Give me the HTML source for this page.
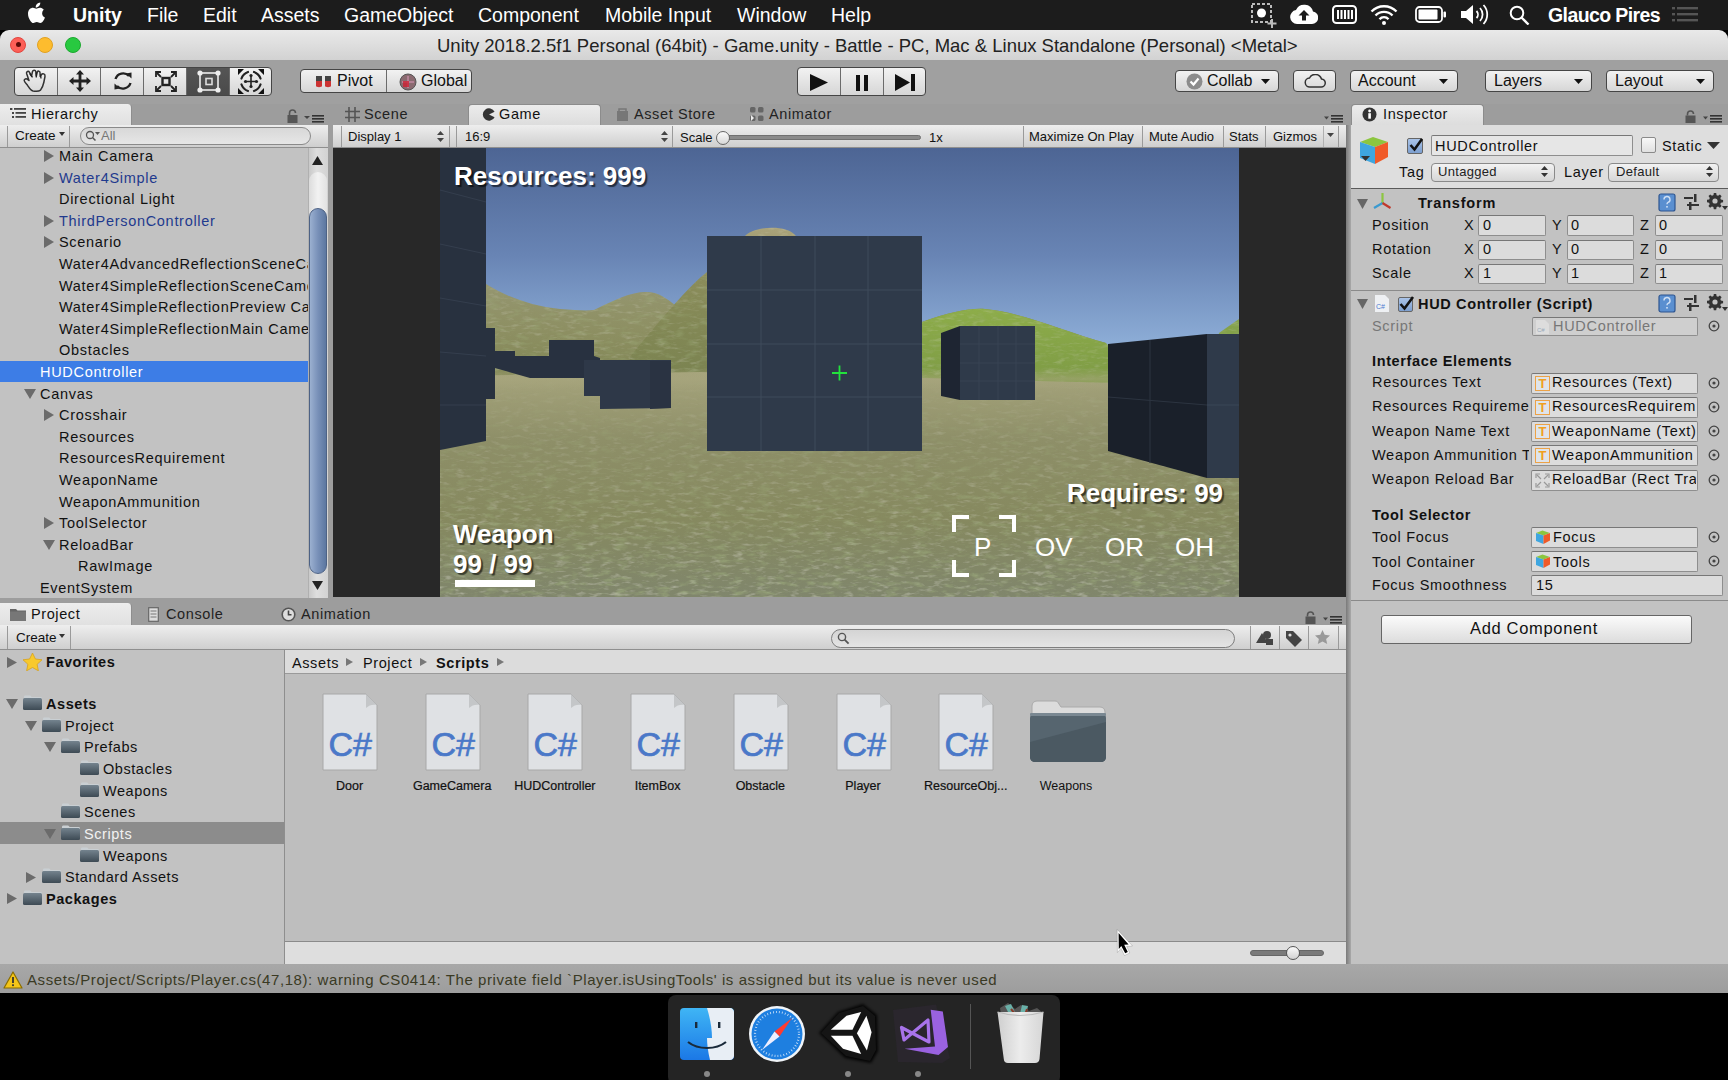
<!DOCTYPE html>
<html><head><meta charset="utf-8">
<style>
*{box-sizing:border-box;margin:0;padding:0}
html,body{width:1728px;height:1080px;overflow:hidden;background:#000;font-family:"Liberation Sans",sans-serif;}
.a{position:absolute}
.t{position:absolute;white-space:nowrap;line-height:1}
#menubar{left:0;top:0;width:1728px;height:30px;background:#1c1c1c;color:#fff;font-size:19.5px}
#titlebar{left:0;top:29.5px;width:1728px;height:30.5px;background:linear-gradient(#e9e9e9,#d2d2d2);border-radius:9px 9px 0 0}
#toolbar{left:0;top:60px;width:1728px;height:44px;background:#a0a0a0}
.btn{position:absolute;border:1px solid #454545;border-radius:4px;background:linear-gradient(#f2f2f2,#d6d6d6);}
.seg{position:absolute;top:0;bottom:0;border-right:1px solid #6b6b6b}
.tabstrip{position:absolute;background:#a3a3a3}
.tab{position:absolute;background:linear-gradient(#ececec,#dcdcdc);border-radius:4px 4px 0 0;border:1px solid #8c8c8c;border-bottom:none}
.tabtxt{font-size:14.5px;letter-spacing:0.6px;color:#111}
.ptool{position:absolute;background:linear-gradient(#eeeeee,#cfcfcf);border-bottom:1px solid #8f8f8f}
.panel{position:absolute;background:#c2c2c2}
.hrow{font-size:14.5px;letter-spacing:0.7px;color:#111}
</style></head><body>
<div class="a" style="left:0;top:60px;width:1728px;height:933px;background:#9d9d9d"></div>
<!-- MENU BAR -->
<div id="menubar" class="a">
 <svg class="a" style="left:28px;top:2px" width="18" height="21.5" viewBox="0 0 20 23"><path fill="#fff" d="M13.6 0c.2 1.5-.4 3-1.3 4-.9 1-2.3 1.8-3.7 1.7-.2-1.4.5-2.9 1.3-3.8C10.8.9 12.3.1 13.6 0zM18.3 7.7c-.2.1-2.6 1.5-2.6 4.4 0 3.4 3 4.6 3.1 4.6 0 .1-.5 1.7-1.6 3.3-1 1.4-2 2.8-3.6 2.8s-2-.9-3.8-.9c-1.8 0-2.4 1-3.8 1-1.5 0-2.6-1.4-3.6-2.9C1.2 18.300 0 15.4 0 12.600c0-4.3 2.800-6.600 5.600-6.600 1.500 0 2.700 1 3.600 1 .9 0 2.300-1 4-1 .6 0 2.9.1 4.4 2.3z"/></svg>
 <div class="t" style="left:73px;top:6px;font-weight:bold">Unity</div>
 <div class="t" style="left:147px;top:6px">File</div>
 <div class="t" style="left:203px;top:6px">Edit</div>
 <div class="t" style="left:261px;top:6px">Assets</div>
 <div class="t" style="left:344px;top:6px">GameObject</div>
 <div class="t" style="left:478px;top:6px">Component</div>
 <div class="t" style="left:605px;top:6px">Mobile Input</div>
 <div class="t" style="left:737px;top:6px">Window</div>
 <div class="t" style="left:831px;top:6px">Help</div>
 <!-- status icons -->
 <svg class="a" style="left:1251px;top:3px" width="27" height="25" viewBox="0 0 27 25"><g fill="none" stroke="#bbb" stroke-width="2" stroke-dasharray="3 2"><rect x="1" y="1" width="19" height="18"/></g><circle cx="10.5" cy="10" r="4.5" fill="#fff"/><path d="M21 16v9M16.5 20.5h9" stroke="#bbb" stroke-width="2"/></svg>
 <svg class="a" style="left:1290px;top:4px" width="28" height="20" viewBox="0 0 28 20"><path fill="#fff" d="M7 20a7 7 0 0 1-1-13.9A9 9 0 0 1 23 7.5a6.3 6.3 0 0 1-1 12.5z"/><path fill="#1c1c1c" d="M14 6l-5.5 5.5h3.5v5h4v-5h3.5z"/></svg>
 <svg class="a" style="left:1332px;top:5px" width="25" height="19" viewBox="0 0 25 19"><rect x="1" y="1" width="23" height="17" rx="3.5" fill="none" stroke="#fff" stroke-width="2"/><g fill="#fff"><rect x="5" y="5" width="2" height="9"/><rect x="8.5" y="5" width="2" height="9"/><rect x="12" y="5" width="2" height="9"/><rect x="15.5" y="5" width="2" height="9"/><rect x="19" y="5" width="2" height="9"/></g></svg>
 <svg class="a" style="left:1370px;top:4px" width="28" height="21" viewBox="0 0 28 21"><g fill="none" stroke="#fff" stroke-width="2.4"><path d="M1.5 7.5a17.5 17.5 0 0 1 25 0"/><path d="M5.5 11.5a11.8 11.8 0 0 1 17 0"/><path d="M9.5 15.2a6 6 0 0 1 9 0"/></g><circle cx="14" cy="19" r="2" fill="#fff"/></svg>
 <svg class="a" style="left:1415px;top:6px" width="32" height="17" viewBox="0 0 32 17"><rect x="1" y="1" width="26" height="15" rx="3.5" fill="none" stroke="#fff" stroke-width="1.8"/><rect x="3.5" y="3.5" width="19" height="10" rx="1" fill="#fff"/><rect x="28.5" y="5.5" width="2.5" height="6" rx="1" fill="#fff"/></svg>
 <svg class="a" style="left:1460px;top:4px" width="29" height="21" viewBox="0 0 29 21"><path fill="#fff" d="M1 7h5l7-6v19l-7-6H1z"/><g fill="none" stroke="#fff" stroke-width="1.8"><path d="M16.5 7a5 5 0 0 1 0 7"/><path d="M20 4a9.5 9.5 0 0 1 0 13"/><path d="M23.5 1a14 14 0 0 1 0 19"/></g></svg>
 <svg class="a" style="left:1509px;top:5px" width="21" height="20" viewBox="0 0 21 20"><circle cx="8" cy="8" r="6.3" fill="none" stroke="#fff" stroke-width="2"/><path d="M12.5 12.5l7 7" stroke="#fff" stroke-width="2.4"/></svg>
 <div class="t" style="left:1548px;top:6px;font-weight:bold;letter-spacing:-0.6px">Glauco Pires</div>
 <svg class="a" style="left:1672px;top:7px" width="26" height="15" viewBox="0 0 26 15"><g fill="#555"><rect x="0" y="0" width="3" height="2.4"/><rect x="5" y="0" width="21" height="2.4"/><rect x="0" y="6" width="3" height="2.4"/><rect x="5" y="6" width="21" height="2.4"/><rect x="0" y="12" width="3" height="2.4"/><rect x="5" y="12" width="21" height="2.4"/></g></svg>
</div>
<!-- TITLE BAR -->
<div id="titlebar" class="a">
 <div class="a" style="left:10px;top:7px;width:16px;height:16px;border-radius:50%;background:#fc5f57;border:1px solid #e2463f"><div class="a" style="left:4.5px;top:4.5px;width:5px;height:5px;border-radius:50%;background:#5a0a07"></div></div>
 <div class="a" style="left:37px;top:7px;width:16px;height:16px;border-radius:50%;background:#fdbc2e;border:1px solid #e1a122"></div>
 <div class="a" style="left:65px;top:7px;width:16px;height:16px;border-radius:50%;background:#28c940;border:1px solid #1ca92f"></div>
 <div class="t" style="left:437px;top:7px;font-size:18.5px;color:#222">Unity 2018.2.5f1 Personal (64bit) - Game.unity - Battle - PC, Mac &amp; Linux Standalone (Personal) &lt;Metal&gt;</div>
</div>
<!-- TOOLBAR -->
<div id="toolbar" class="a">
 <div class="btn" style="left:14px;top:7px;width:258px;height:29px;overflow:hidden">
  <div class="seg" style="left:0;width:43px"></div>
  <div class="seg" style="left:43px;width:43px"></div>
  <div class="seg" style="left:86px;width:43px"></div>
  <div class="seg" style="left:129px;width:43px"></div>
  <div class="seg" style="left:172px;width:43px;background:linear-gradient(#555,#4a4a4a)"></div>
  <!-- hand -->
  <svg class="a" style="left:8px;top:1px" width="24" height="24" viewBox="-1 -1 24 24"><path d="M3.5 15.3C2 13.5 0.3 11.8 0.2 10.5 0.1 9 2.2 8.3 3.5 9.3L5 10.5 2.6 3.5C2 1.5 4.5 0.5 5.5 2.3L7.5 6 8.5 1.5C9 -0.3 11.5-.2 11.8 1.7L12.3 6 13.3 2C13.8.6 16 .9 16 2.6L16.2 6.5 17.5 4.5C18.5 3 21.5 3.8 21 6.5L19.8 12.5C19.3 15 18 18 16.5 20.2 15.5 21 12 21.5 9 21 6.5 20.5 5 17.5 3.5 15.3z" fill="none" stroke="#333" stroke-width="1.5" stroke-linejoin="round"/><path d="M5.7 3.5l2.8 3.8M12.3 2.5v5M16.5 4.5l.5 4" stroke="#222" stroke-width="1.3"/></svg>
  <!-- move -->
  <svg class="a" style="left:54px;top:2px" width="22" height="22" viewBox="0 0 22 22"><path fill="#222" d="M11 0l4 4.5h-2.6v5.1h5.1V7L22 11l-4.5 4v-2.6h-5.1v5.1H15L11 22l-4-4.5h2.6v-5.1H4.5V15L0 11l4.5-4v2.6h5.1V4.5H7z"/></svg>
  <!-- rotate -->
  <svg class="a" style="left:97px;top:3px" width="22" height="20" viewBox="0 0 22 20"><g fill="none" stroke="#222" stroke-width="2.4"><path d="M3.5 8A8 8 0 0 1 17 5"/><path d="M18.5 12A8 8 0 0 1 5 15"/></g><path fill="#222" d="M14 2.5l5.5-1v6zM8 17.5l-5.5 1v-6z"/></svg>
  <!-- scale -->
  <svg class="a" style="left:140px;top:3px" width="22" height="21" viewBox="0 0 22 21"><g fill="none" stroke="#222" stroke-width="1.8"><path d="M1 6V1h5M16 1h5v5M21 15v5h-5M6 20H1v-5"/><path d="M2 2l4 4M20 2l-4 4M20 19l-4-4M2 19l4-4"/><rect x="7.5" y="7" width="7" height="7" stroke-width="2.4"/></g></svg>
  <!-- rect -->
  <svg class="a" style="left:182px;top:2px" width="24" height="23" viewBox="0 0 24 23"><rect x="3" y="3" width="18" height="17" fill="none" stroke="#eee" stroke-width="1.6"/><g fill="#eee"><circle cx="3" cy="3" r="2.6"/><circle cx="21" cy="3" r="2.6"/><circle cx="3" cy="20" r="2.6"/><circle cx="21" cy="20" r="2.6"/></g><rect x="9" y="8.5" width="6" height="6" fill="none" stroke="#ddd" stroke-width="1.6"/></svg>
  <!-- transform -->
  <svg class="a" style="left:223px;top:1px" width="26" height="25" viewBox="0 0 26 25"><path d="M0 0h6L0 6zM26 0h-6l6 6zM0 25h6L0 19zM26 25h-6l6-6z" fill="#111"/><g fill="none" stroke="#222" stroke-width="2.2" stroke-linecap="round"><path d="M3.5 9.5A10.5 10.5 0 0 1 10 3M16 3a10.5 10.5 0 0 1 6.5 6.5M22.5 15.5A10.5 10.5 0 0 1 16 22M10 22a10.5 10.5 0 0 1-6.5-6.5"/></g><path d="M7.5 12.5h11M13 6.5v11" stroke="#222" stroke-width="1.6"/><g fill="#222"><circle cx="7.5" cy="12.5" r="1.6"/><circle cx="18.5" cy="12.5" r="1.6"/><circle cx="13" cy="6.5" r="1.6"/><circle cx="13" cy="17.5" r="1.6"/></g></svg>
 </div>
 <div class="btn" style="left:300px;top:9px;width:172px;height:24px;overflow:hidden">
  <div class="seg" style="left:0;width:86px"></div>
  <svg class="a" style="left:14px;top:5px" width="18" height="14" viewBox="0 0 18 14"><path fill="#444" d="M1 1h6v6H1z"/><path fill="#c33" d="M1 6h6v5c0 1.5-6 1.5-6 0z"/><path fill="#444" d="M10 1h6v6h-6z"/><path fill="#c33" d="M10 6h6v5c0 1.5-6 1.5-6 0z"/></svg>
  <div class="t" style="left:36px;top:3px;font-size:16px;color:#111">Pivot</div>
  <svg class="a" style="left:98px;top:3px" width="18" height="18" viewBox="0 0 18 18"><circle cx="9" cy="9" r="8" fill="#8a6a70"/><circle cx="9" cy="9" r="8" fill="none" stroke="#555" stroke-width="1"/><path d="M3 9h12M9 3v12" stroke="#d9b" stroke-width="1"/><path fill="#c23" d="M4 8h6v6H4z" opacity=".8"/></svg>
  <div class="t" style="left:120px;top:3px;font-size:16px;color:#111">Global</div>
 </div>
 <div class="btn" style="left:797px;top:7px;width:129px;height:29px;overflow:hidden">
  <div class="seg" style="left:0;width:43px"></div>
  <div class="seg" style="left:43px;width:43px"></div>
  <svg class="a" style="left:11px;top:6px" width="20" height="17" viewBox="0 0 20 17"><path fill="#111" d="M1 0l18 8.5L1 17z"/></svg>
  <svg class="a" style="left:57px;top:7px" width="14" height="16" viewBox="0 0 14 16"><rect x="1" y="0" width="4" height="16" fill="#111"/><rect x="9" y="0" width="4" height="16" fill="#111"/></svg>
  <svg class="a" style="left:97px;top:6px" width="22" height="17" viewBox="0 0 22 17"><path fill="#111" d="M0 0l15 8.5L0 17z"/><rect x="16" y="0" width="4" height="17" fill="#111"/></svg>
 </div>
 <div class="btn" style="left:1175px;top:10px;width:104px;height:22px">
  <svg class="a" style="left:10px;top:2px" width="17" height="17" viewBox="0 0 17 17"><circle cx="8.5" cy="8.5" r="8" fill="#8c8c8c"/><path d="M4.5 8.5l3 3 5-6" fill="none" stroke="#fff" stroke-width="2.2"/></svg>
  <div class="t" style="left:31px;top:2px;font-size:16px;color:#111">Collab</div>
  <svg class="a" style="left:85px;top:8px" width="9" height="6" viewBox="0 0 9 6"><path d="M0 0h9L4.5 5z" fill="#111"/></svg>
 </div>
 <div class="btn" style="left:1293px;top:10px;width:43px;height:22px">
  <svg class="a" style="left:10px;top:3px" width="22" height="14" viewBox="0 0 22 14"><path d="M6 13a4.5 4.5 0 0 1-.5-9A6.5 6.5 0 0 1 17.5 5a4 4 0 0 1-.5 8z" fill="none" stroke="#333" stroke-width="1.5"/></svg>
 </div>
 <div class="btn" style="left:1350px;top:10px;width:108px;height:22px">
  <div class="t" style="left:7px;top:2px;font-size:16px;color:#111">Account</div>
  <svg class="a" style="left:88px;top:8px" width="9" height="6" viewBox="0 0 9 6"><path d="M0 0h9L4.5 5z" fill="#111"/></svg>
 </div>
 <div class="btn" style="left:1485px;top:10px;width:107px;height:22px">
  <div class="t" style="left:8px;top:2px;font-size:16px;color:#111">Layers</div>
  <svg class="a" style="left:88px;top:8px" width="9" height="6" viewBox="0 0 9 6"><path d="M0 0h9L4.5 5z" fill="#111"/></svg>
 </div>
 <div class="btn" style="left:1606px;top:10px;width:108px;height:22px">
  <div class="t" style="left:8px;top:2px;font-size:16px;color:#111">Layout</div>
  <svg class="a" style="left:89px;top:8px" width="9" height="6" viewBox="0 0 9 6"><path d="M0 0h9L4.5 5z" fill="#111"/></svg>
 </div>
</div>
<!-- HIERARCHY -->
<div class="a" style="left:0;top:104px;width:132px;height:22px;background:linear-gradient(#ededed,#e0e0e0);border-radius:0 4px 0 0;border-right:1px solid #8e8e8e"></div>
<svg class="a" style="left:10px;top:108px" width="16" height="13" viewBox="0 0 16 13"><g fill="#444"><rect x="0" y="0" width="2.4" height="2"/><rect x="4" y="0" width="12" height="1.8"/><rect x="2" y="4" width="2" height="2"/><rect x="5.5" y="4" width="10.5" height="1.8"/><rect x="2" y="8" width="2" height="2"/><rect x="5.5" y="8" width="10.5" height="1.8"/></g></svg>
<div class="t tabtxt" style="left:31px;top:107px">Hierarchy</div>
<svg class="a" style="left:287px;top:109px" width="11" height="14" viewBox="0 0 11 14"><path d="M2.5 6V4a3 3 0 0 1 6 0" fill="none" stroke="#555" stroke-width="1.6"/><rect x="0.5" y="6" width="10" height="8" fill="#555"/></svg>
<svg class="a" style="left:304px;top:114px" width="20" height="9" viewBox="0 0 20 9"><path d="M0 2h6L3 5z" fill="#444"/><g fill="#333"><rect x="8" y="1" width="12" height="1.6"/><rect x="8" y="4" width="12" height="1.6"/><rect x="8" y="7" width="12" height="1.6"/></g></svg>
<div class="ptool" style="left:0;top:125px;width:328px;height:23px"></div>
<div class="a" style="left:7px;top:126px;width:1px;height:21px;background:#9a9a9a"></div>
<div class="a" style="left:69px;top:126px;width:1px;height:21px;background:#9a9a9a"></div>
<div class="t" style="left:15px;top:129px;font-size:13.5px;color:#111">Create</div>
<svg class="a" style="left:59px;top:132px" width="6" height="4" viewBox="0 0 6 4"><path d="M0 0h6L3 4z" fill="#333"/></svg>
<div class="a" style="left:80px;top:127px;width:231px;height:18px;border:1px solid #8a8a8a;border-radius:9px;background:linear-gradient(#d8d8d8,#e6e6e6)"></div>
<svg class="a" style="left:85px;top:130px" width="16" height="12" viewBox="0 0 16 12"><circle cx="5" cy="5" r="3.5" fill="none" stroke="#555" stroke-width="1.3"/><path d="M7.5 7.5l3 3" stroke="#555" stroke-width="1.5"/><path d="M10 2h5l-2.5 3z" fill="#555"/></svg>
<div class="t" style="left:101px;top:129px;font-size:13px;color:#777">All</div>
<div class="panel" style="left:0;top:148px;width:308px;height:450px;overflow:hidden">
<div class="a" style="left:0;top:213px;width:308px;height:21px;background:#3d7de6"></div>

<div class="t hrow" style="left:59px;top:1.0px;color:#111">Main Camera</div>
<svg class="a" style="left:44px;top:2.0px" width="10" height="12" viewBox="0 0 10 12"><path d="M0 0l10 6-10 6z" fill="#6b6b6b"/></svg>
<div class="t hrow" style="left:59px;top:22.6px;color:#1f3a8e">Water4Simple</div>
<svg class="a" style="left:44px;top:23.6px" width="10" height="12" viewBox="0 0 10 12"><path d="M0 0l10 6-10 6z" fill="#6b6b6b"/></svg>
<div class="t hrow" style="left:59px;top:44.2px;color:#111">Directional Light</div>
<div class="t hrow" style="left:59px;top:65.8px;color:#1f3a8e">ThirdPersonController</div>
<svg class="a" style="left:44px;top:66.8px" width="10" height="12" viewBox="0 0 10 12"><path d="M0 0l10 6-10 6z" fill="#6b6b6b"/></svg>
<div class="t hrow" style="left:59px;top:87.4px;color:#111">Scenario</div>
<svg class="a" style="left:44px;top:88.4px" width="10" height="12" viewBox="0 0 10 12"><path d="M0 0l10 6-10 6z" fill="#6b6b6b"/></svg>
<div class="t hrow" style="left:59px;top:109.0px;color:#111">Water4AdvancedReflectionSceneCamera</div>
<div class="t hrow" style="left:59px;top:130.6px;color:#111">Water4SimpleReflectionSceneCamera</div>
<div class="t hrow" style="left:59px;top:152.2px;color:#111">Water4SimpleReflectionPreview Camera</div>
<div class="t hrow" style="left:59px;top:173.8px;color:#111">Water4SimpleReflectionMain Camera</div>
<div class="t hrow" style="left:59px;top:195.4px;color:#111">Obstacles</div>
<div class="t hrow" style="left:40px;top:217.0px;color:#fff">HUDController</div>
<div class="t hrow" style="left:40px;top:238.6px;color:#111">Canvas</div>
<svg class="a" style="left:24px;top:240.6px" width="12" height="10" viewBox="0 0 12 10"><path d="M0 0h12L6 10z" fill="#6b6b6b"/></svg>
<div class="t hrow" style="left:59px;top:260.2px;color:#111">Crosshair</div>
<svg class="a" style="left:44px;top:261.2px" width="10" height="12" viewBox="0 0 10 12"><path d="M0 0l10 6-10 6z" fill="#6b6b6b"/></svg>
<div class="t hrow" style="left:59px;top:281.8px;color:#111">Resources</div>
<div class="t hrow" style="left:59px;top:303.4px;color:#111">ResourcesRequirement</div>
<div class="t hrow" style="left:59px;top:325.0px;color:#111">WeaponName</div>
<div class="t hrow" style="left:59px;top:346.6px;color:#111">WeaponAmmunition</div>
<div class="t hrow" style="left:59px;top:368.2px;color:#111">ToolSelector</div>
<svg class="a" style="left:44px;top:369.2px" width="10" height="12" viewBox="0 0 10 12"><path d="M0 0l10 6-10 6z" fill="#6b6b6b"/></svg>
<div class="t hrow" style="left:59px;top:389.8px;color:#111">ReloadBar</div>
<svg class="a" style="left:43px;top:391.8px" width="12" height="10" viewBox="0 0 12 10"><path d="M0 0h12L6 10z" fill="#6b6b6b"/></svg>
<div class="t hrow" style="left:78px;top:411.4px;color:#111">RawImage</div>
<div class="t hrow" style="left:40px;top:433.0px;color:#111">EventSystem</div>
</div>
<div class="a" style="left:308px;top:148px;width:20px;height:450px;background:linear-gradient(90deg,#c9c9c9,#dedede 40%,#d2d2d2);border-left:1px solid #b0b0b0"></div>
<svg class="a" style="left:312px;top:156px" width="11" height="9" viewBox="0 0 11 9"><path d="M5.5 0L11 9H0z" fill="#222"/></svg>
<div class="a" style="left:309px;top:172px;width:18px;height:402px;border-radius:9px;background:linear-gradient(90deg,#dcdcdc,#f2f2f2 50%,#e2e2e2)"></div>
<div class="a" style="left:309px;top:208px;width:18px;height:366px;border-radius:9px;background:linear-gradient(90deg,#9bb0d0,#7890b8 50%,#5c77a0);border:1px solid #4d6285"></div>
<svg class="a" style="left:312px;top:581px" width="11" height="9" viewBox="0 0 11 9"><path d="M0 0h11L5.5 9z" fill="#222"/></svg>
<!-- GAME PANEL -->
<svg class="a" style="left:345px;top:107px" width="15" height="15" viewBox="0 0 15 15"><g stroke="#555" stroke-width="1.6"><path d="M4 0v15M10 0v15M0 4.5h15M0 10.5h15"/></g></svg>
<div class="t tabtxt" style="left:364px;top:107px;color:#222">Scene</div>
<div class="tab" style="left:468px;top:104px;width:133px;height:22px"></div>
<svg class="a" style="left:482px;top:108px" width="14" height="13" viewBox="0 0 14 13"><path d="M7 6.5L12.6 3.8A6.2 6.2 0 1 0 12.6 9.2z" fill="#333"/></svg>
<div class="t tabtxt" style="left:499px;top:107px">Game</div>
<svg class="a" style="left:616px;top:107px" width="13" height="14" viewBox="0 0 13 14"><path d="M1 4h11v10H1z" fill="#777"/><path d="M3 4V2h7v2" fill="none" stroke="#777" stroke-width="1.5"/></svg>
<div class="t tabtxt" style="left:634px;top:107px;color:#222">Asset Store</div>
<svg class="a" style="left:750px;top:107px" width="14" height="15" viewBox="0 0 14 15"><g fill="#666"><rect x="0" y="0" width="5.5" height="5.5" rx="1.5"/><rect x="8" y="0" width="5.5" height="5.5" rx="1.5"/><rect x="8" y="8.5" width="5.5" height="5.5" rx="1.5"/><rect x="0" y="8.5" width="5.5" height="5.5" rx="1.5"/></g><path d="M1 8l3 3-3 3z" fill="#eee"/></svg>
<div class="t tabtxt" style="left:769px;top:107px;color:#222">Animator</div>
<svg class="a" style="left:1324px;top:115px" width="19" height="8" viewBox="0 0 19 8"><path d="M0 1.5h5L2.5 4.5z" fill="#444"/><g fill="#333"><rect x="7" y="0" width="12" height="1.6"/><rect x="7" y="3" width="12" height="1.6"/><rect x="7" y="6" width="12" height="1.6"/></g></svg>
<div class="ptool" style="left:333px;top:125px;width:1013px;height:23px"></div>
<div class="a" style="left:341px;top:126px;width:1px;height:21px;background:#9a9a9a"></div>
<div class="t" style="left:348px;top:130px;font-size:13px;color:#111">Display 1</div>
<svg class="a" style="left:437px;top:131px" width="7" height="11" viewBox="0 0 7 11"><path d="M0 4h7L3.5 0zM0 7h7l-3.5 4z" fill="#444"/></svg>
<div class="a" style="left:449px;top:126px;width:1px;height:21px;background:#9a9a9a"></div>
<div class="a" style="left:456px;top:126px;width:1px;height:21px;background:#9a9a9a"></div>
<div class="t" style="left:465px;top:130px;font-size:13px;color:#111">16:9</div>
<svg class="a" style="left:661px;top:131px" width="7" height="11" viewBox="0 0 7 11"><path d="M0 4h7L3.5 0zM0 7h7l-3.5 4z" fill="#444"/></svg>
<div class="a" style="left:672px;top:126px;width:1px;height:21px;background:#9a9a9a"></div>
<div class="t" style="left:680px;top:131px;font-size:13px;color:#111">Scale</div>
<div class="a" style="left:718px;top:135px;width:203px;height:5px;border-radius:3px;background:#8a8a8a;border:1px solid #707070"></div>
<div class="a" style="left:716px;top:131px;width:14px;height:14px;border-radius:50%;background:linear-gradient(#fafafa,#d8d8d8);border:1px solid #666"></div>
<div class="t" style="left:929px;top:131px;font-size:13px;color:#111">1x</div>
<div class="a" style="left:1023px;top:126px;width:1px;height:21px;background:#9a9a9a"></div>
<div class="t" style="left:1029px;top:130px;font-size:13px;color:#111">Maximize On Play</div>
<div class="a" style="left:1142px;top:126px;width:1px;height:21px;background:#9a9a9a"></div>
<div class="t" style="left:1149px;top:130px;font-size:13px;color:#111">Mute Audio</div>
<div class="a" style="left:1223px;top:126px;width:1px;height:21px;background:#9a9a9a"></div>
<div class="t" style="left:1229px;top:130px;font-size:13px;color:#111">Stats</div>
<div class="a" style="left:1265px;top:126px;width:1px;height:21px;background:#9a9a9a"></div>
<div class="t" style="left:1273px;top:130px;font-size:13px;color:#111">Gizmos</div>
<div class="a" style="left:1323px;top:126px;width:1px;height:21px;background:#b0b0b0"></div>
<svg class="a" style="left:1327px;top:133px" width="7" height="5" viewBox="0 0 7 5"><path d="M0 0h7L3.5 4z" fill="#444"/></svg>
<div class="a" style="left:1338px;top:126px;width:1px;height:21px;background:#9a9a9a"></div>
<div class="a" style="left:333px;top:148px;width:1013px;height:449px;background:#282828"></div>
<svg class="a" style="left:440px;top:148px" width="799" height="449" viewBox="440 148 799 449">
 <defs>
  <linearGradient id="sky" x1="0" y1="148" x2="0" y2="385" gradientUnits="userSpaceOnUse"><stop offset="0" stop-color="#4d6594"/><stop offset="0.45" stop-color="#6884b4"/><stop offset="0.8" stop-color="#8aaad4"/><stop offset="1" stop-color="#a3c0e2"/></linearGradient>
  <linearGradient id="gnd" x1="0" y1="372" x2="0" y2="597" gradientUnits="userSpaceOnUse"><stop offset="0" stop-color="#a6a47c"/><stop offset="0.3" stop-color="#8e8f68"/><stop offset="0.65" stop-color="#86895f"/><stop offset="1" stop-color="#80866c"/></linearGradient>
  <linearGradient id="hillL" x1="0" y1="284" x2="0" y2="380" gradientUnits="userSpaceOnUse"><stop offset="0" stop-color="#959670"/><stop offset="0.5" stop-color="#8d8f62"/><stop offset="1" stop-color="#808654"/></linearGradient>
  <linearGradient id="hillR" x1="0" y1="300" x2="0" y2="385" gradientUnits="userSpaceOnUse"><stop offset="0" stop-color="#8faf4a"/><stop offset="1" stop-color="#7d9a45"/></linearGradient>
  <linearGradient id="hillC" x1="0" y1="225" x2="0" y2="380" gradientUnits="userSpaceOnUse"><stop offset="0" stop-color="#aca47c"/><stop offset="0.35" stop-color="#8a8c5a"/><stop offset="1" stop-color="#7a8350"/></linearGradient>
  <filter id="grain" x="0" y="0" width="100%" height="100%"><feTurbulence type="fractalNoise" baseFrequency="0.09 0.28" numOctaves="3" seed="7"/><feColorMatrix values="0 0 0 0 0.72  0 0 0 0 0.72  0 0 0 0 0.64  3 0 0 0 -1.6"/></filter><filter id="grain2" x="0" y="0" width="100%" height="100%"><feTurbulence type="fractalNoise" baseFrequency="0.07 0.22" numOctaves="3" seed="19"/><feColorMatrix values="0 0 0 0 0.36  0 0 0 0 0.45  0 0 0 0 0.22  3.2 0 0 0 -1.6"/></filter>
 <clipPath id="gclip"><path d="M440 376 L700 372 L1000 380 L1239 386 L1239 597 L440 597z"/></clipPath><linearGradient id="gm" x1="0" y1="372" x2="0" y2="597" gradientUnits="userSpaceOnUse"><stop offset="0" stop-color="#000"/><stop offset="0.25" stop-color="#666"/><stop offset="1" stop-color="#fff"/></linearGradient><mask id="gmask"><rect x="440" y="372" width="799" height="225" fill="url(#gm)"/></mask><linearGradient id="hz" x1="0" y1="0" x2="0" y2="1"><stop offset="0" stop-color="#a8a67e" stop-opacity="0"/><stop offset="0.5" stop-color="#a8a67e" stop-opacity=".55"/><stop offset="1" stop-color="#a8a67e" stop-opacity="0"/></linearGradient></defs>
 <rect x="440" y="148" width="799" height="449" fill="url(#sky)"/>
 <!-- hills -->
<path d="M486 284 C505 296 530 306 560 309 C575 310 585 311 594 310 C615 300 630 292 646 292 C660 292 668 300 675 305 L700 382 L486 382z" fill="url(#hillL)"/>
 <path d="M630 357 C660 320 690 285 707 272 L745 236 C752 227 786 223 796 236 L922 322 C950 312 970 308 985 309 C1020 312 1060 330 1106 343 L1106 386 L630 386z" fill="url(#hillC)"/>
 <path d="M922 322 C950 312 970 308 985 309 C1020 312 1060 330 1106 343 L1150 390 L922 390z" fill="url(#hillR)"/>
 <path d="M1219 333 L1239 319 L1239 390 L1210 390z" fill="#84a24a"/>
<clipPath id="hclip"><path d="M486 284 C505 296 530 306 560 309 C575 310 585 311 594 310 C615 300 630 292 646 292 C660 292 668 300 675 305 L700 382 L486 382z"/> <path d="M630 357 C660 320 690 285 707 272 L745 236 C752 227 786 223 796 236 L922 322 C950 312 970 308 985 309 C1020 312 1060 330 1106 343 L1106 386 L630 386z"/> <path d="M922 322 C950 312 970 308 985 309 C1020 312 1060 330 1106 343 L1150 390 L922 390z"/> <path d="M1219 333 L1239 319 L1239 390 L1210 390z"/></clipPath><g clip-path="url(#hclip)"><rect x="480" y="220" width="760" height="170" filter="url(#grain)" opacity="0.25"/><rect x="480" y="220" width="760" height="170" filter="url(#grain2)" opacity="0.3"/></g>
<!-- ground -->
 <path d="M440 376 L700 372 L1000 380 L1239 386 L1239 597 L440 597z" fill="url(#gnd)"/>
 <g clip-path="url(#gclip)" mask="url(#gmask)"><rect x="440" y="372" width="799" height="225" filter="url(#grain)" opacity="0.45"/><rect x="440" y="372" width="799" height="225" filter="url(#grain2)" opacity="0.5"/></g><rect x="440" y="368" width="799" height="22" fill="url(#hz)"/>
 <!-- left pillar -->
 <path d="M440 148 L486 148 L486 328 L495 328 L495 399 L486 399 L486 441 L440 450z" fill="#28313f"/>
 <g stroke="#3a4454" stroke-width="1" opacity=".7"><path d="M440 190l46 12M440 244l46 10M440 298l46 8M440 352l46 4M440 405l46 0"/></g>
 <!-- elongated dark shapes -->
 <path d="M495 351 L515 351 L515 356 L549 356 L549 340 L594 340 L594 356 L600 358 L600 378 L530 378 L495 368z" fill="#283140"/>
 <path d="M584 360 L671 360 L671 408 L600 409 L600 396 L584 396z" fill="#2e3848"/>
 <path d="M650 361 L671 361 L671 408 L650 409z" fill="#2a3342"/>
 <!-- central box -->
 <rect x="707" y="236" width="215" height="215" fill="#2f3a4a"/>
 <g stroke="#3e4a5b" stroke-width="1"><path d="M761 236v215M815 236v215M868 236v215M707 290h215M707 344h215M707 397h215"/></g>
 <path d="M832 373h15M839.5 365.5v15" stroke="#22e23c" stroke-width="1.8"/>
 <!-- medium box -->
 <path d="M941 333 L960 326 L960 400 L941 396z" fill="#1e2532"/>
 <rect x="960" y="326" width="75" height="74" fill="#2f3a4a"/>
 <g stroke="#3b4657" stroke-width="1" opacity=".8"><path d="M979 326v74M998 326v74M1016 326v74M960 344h75M960 363h75M960 381h75"/></g>
 <!-- far right box -->
 <path d="M1108 344 L1207 334 L1207 478 L1108 451z" fill="#1a202a"/>
 <path d="M1150 340 L1150 463 M1108 397 L1207 405" stroke="#2c3440" stroke-width="1"/>
 <rect x="1207" y="334" width="32" height="144" fill="#2f3a4a"/>
 <path d="M1207 405h32" stroke="#3b4657" stroke-width="1"/>
</svg>
<!-- HUD -->
<div class="t" style="left:454px;top:163px;font-size:26px;font-weight:bold;color:#fff;text-shadow:2px 2px 1px rgba(0,0,0,.6)">Resources: 999</div>
<div class="t" style="left:1067px;top:480px;font-size:26px;font-weight:bold;color:#fff;text-shadow:2px 2px 1px rgba(0,0,0,.6)">Requires: 99</div>
<div class="t" style="left:453px;top:521px;font-size:26px;font-weight:bold;color:#fff;text-shadow:2px 2px 1px rgba(0,0,0,.6)">Weapon</div>
<div class="t" style="left:453px;top:551px;font-size:26px;font-weight:bold;color:#fff;text-shadow:2px 2px 1px rgba(0,0,0,.6)">99 / 99</div>
<div class="a" style="left:455px;top:580px;width:80px;height:7px;background:#fff"></div>
<svg class="a" style="left:952px;top:515px" width="64" height="62" viewBox="0 0 64 62"><g fill="none" stroke="#fff" stroke-width="4"><path d="M2 17V2h15M47 2h15v15M62 45v15H47M17 60H2V45"/></g></svg>
<div class="t" style="left:974px;top:534px;font-size:26px;color:#fff">P</div>
<div class="t" style="left:1035px;top:534px;font-size:26px;color:#fff">OV</div>
<div class="t" style="left:1105px;top:534px;font-size:26px;color:#fff">OR</div>
<div class="t" style="left:1175px;top:534px;font-size:26px;color:#fff">OH</div>
<!-- INSPECTOR -->
<div class="a" style="left:1346px;top:125px;width:5px;height:840px;background:linear-gradient(90deg,#7a7a7a,#a9a9a9)"></div>
<div class="tab" style="left:1351px;top:104px;width:133px;height:22px"></div>
<svg class="a" style="left:1362px;top:107px" width="15" height="15" viewBox="0 0 15 15"><circle cx="7.5" cy="7.5" r="7" fill="#333"/><rect x="6.3" y="6.2" width="2.6" height="5.5" fill="#fff"/><circle cx="7.6" cy="4" r="1.4" fill="#fff"/></svg>
<div class="t tabtxt" style="left:1383px;top:107px">Inspector</div>
<svg class="a" style="left:1685px;top:110px" width="11" height="13" viewBox="0 0 11 13"><path d="M2.5 5.5V4a3 3 0 0 1 6 0" fill="none" stroke="#555" stroke-width="1.6"/><rect x="0.5" y="5.5" width="10" height="7.5" fill="#555"/></svg>
<svg class="a" style="left:1703px;top:115px" width="19" height="8" viewBox="0 0 19 8"><path d="M0 1.5h5L2.5 4.5z" fill="#444"/><g fill="#333"><rect x="7" y="0" width="12" height="1.6"/><rect x="7" y="3" width="12" height="1.6"/><rect x="7" y="6" width="12" height="1.6"/></g></svg>
<div class="panel" style="left:1351px;top:125px;width:377px;height:840px"></div>
<div class="a" style="left:1351px;top:125px;width:377px;height:64px;background:#dedede;border-bottom:1px solid #5a5a5a"></div>
<svg class="a" style="left:1358px;top:134px" width="32" height="32" viewBox="0 0 32 32"><path d="M2 8L15 3l15 5-13 5z" fill="#8cc63f"/><path d="M2 8l15 5v17L2 24z" fill="#3ea6e0"/><path d="M17 13l13-5v15l-13 7z" fill="#f05a28"/><path d="M3 22h9l-4.5 5z" fill="#333"/></svg>
<div class="a" style="left:1407px;top:138px;width:16px;height:16px;border:1px solid #666;border-radius:2px;background:linear-gradient(#a9c3e8,#7d9fcf)"></div>
<svg class="a" style="left:1408px;top:137px" width="16" height="15" viewBox="0 0 16 15"><path d="M2.5 8l4 4.5L14 2" fill="none" stroke="#111" stroke-width="2.6"/></svg>

<div class="a" style="left:1431px;top:135px;width:202px;height:21px;background:#e6e6e6;border:1px solid #8e8e8e;border-top-color:#777;border-radius:2px"></div>
<div class="t" style="left:1435px;top:138.5px;font-size:14.5px;letter-spacing:0.7px;color:#111;">HUDController</div>
<div class="a" style="left:1641px;top:137px;width:15px;height:16px;border:1px solid #8a8a8a;border-radius:2px;background:linear-gradient(#f8f8f8,#e0e0e0)"></div>
<div class="t" style="left:1662px;top:138.5px;font-size:14.5px;letter-spacing:0.7px;color:#111;">Static</div>
<svg class="a" style="left:1707px;top:142px" width="13" height="7" viewBox="0 0 13 7"><path d="M0 0h13L6.5 7z" fill="#333"/></svg>
<div class="t" style="left:1399px;top:165.0px;font-size:14.5px;letter-spacing:0.7px;color:#111;">Tag</div>
<div class="btn" style="left:1431px;top:163px;width:124px;height:19px;border-color:#8a8a8a"></div>
<div class="t" style="left:1438px;top:165.0px;font-size:13px;letter-spacing:0.3px;color:#222;">Untagged</div>
<svg class="a" style="left:1541px;top:166px" width="7" height="11" viewBox="0 0 7 11"><path d="M0 4h7L3.5 0zM0 7h7l-3.5 4z" fill="#333"/></svg>
<div class="t" style="left:1564px;top:165.0px;font-size:14.5px;letter-spacing:0.7px;color:#111;">Layer</div>
<div class="btn" style="left:1608px;top:163px;width:111px;height:19px;border-color:#8a8a8a"></div>
<div class="t" style="left:1616px;top:165.0px;font-size:13px;letter-spacing:0.3px;color:#222;">Default</div>
<svg class="a" style="left:1706px;top:166px" width="7" height="11" viewBox="0 0 7 11"><path d="M0 4h7L3.5 0zM0 7h7l-3.5 4z" fill="#333"/></svg>
<svg class="a" style="left:1357px;top:199px" width="11" height="10" viewBox="0 0 11 10"><path d="M0 0h11L5.5 10z" fill="#666"/></svg>
<svg class="a" style="left:1372px;top:193px" width="21" height="18" viewBox="0 0 21 18"><path d="M10.5 0v10" stroke="#8dc641" stroke-width="2.2"/><path d="M10.5 10L2 15" stroke="#3a9ad0" stroke-width="2.2"/><path d="M10.5 10l8 5" stroke="#c0392b" stroke-width="2.2"/></svg>
<div class="t" style="left:1418px;top:196.0px;font-size:14.5px;letter-spacing:0.8px;color:#111;font-weight:bold;">Transform</div>
<svg class="a" style="left:1658px;top:193px" width="18" height="19" viewBox="0 0 18 19"><rect x="1" y="1" width="16" height="17" rx="2" fill="#5a8fd0" stroke="#2d5590" stroke-width="1.2"/><path d="M6 6.5a3 3 0 1 1 4 2.8c-1 .4-1 1-1 2" fill="none" stroke="#cfe0f5" stroke-width="1.4"/><rect x="8.2" y="13" width="1.6" height="1.6" fill="#cfe0f5"/></svg>
<svg class="a" style="left:1684px;top:194px" width="15" height="17" viewBox="0 0 15 17"><g fill="#333"><rect x="0" y="3" width="9" height="2"/><rect x="10" y="0" width="2.5" height="8"/><rect x="3" y="10" width="12" height="2"/><rect x="5" y="8" width="2.5" height="8"/></g></svg>
<svg class="a" style="left:1707px;top:193px" width="21" height="19" viewBox="0 0 21 19"><path fill="#333" d="M6.8 0h2.4l.4 2.2 1.5.6 1.8-1.3 1.7 1.7-1.3 1.8.6 1.5 2.2.4v2.4l-2.2.4-.6 1.5 1.3 1.8-1.7 1.7-1.8-1.3-1.5.6-.4 2.2H6.8l-.4-2.2-1.5-.6-1.8 1.3-1.7-1.7 1.3-1.8-.6-1.5L0 9.2V6.8l2.2-.4.6-1.5L1.5 3.1l1.7-1.7 1.8 1.3 1.5-.6z"/><circle cx="8" cy="8" r="2.6" fill="#c2c2c2"/><path d="M15 13h6l-3 4z" fill="#333"/></svg>
<div class="t" style="left:1372px;top:218.0px;font-size:14.5px;letter-spacing:0.7px;color:#111;">Position</div>
<div class="t" style="left:1464px;top:218.0px;font-size:14.5px;letter-spacing:0.7px;color:#111;">X</div>
<div class="a" style="left:1478px;top:215px;width:68px;height:21px;background:#dcdcdc;border:1px solid #8e8e8e;border-top-color:#777;border-radius:2px"></div>
<div class="t" style="left:1483px;top:218.0px;font-size:14.5px;letter-spacing:0.7px;color:#111;">0</div>
<div class="t" style="left:1552px;top:218.0px;font-size:14.5px;letter-spacing:0.7px;color:#111;">Y</div>
<div class="a" style="left:1567px;top:215px;width:67px;height:21px;background:#dcdcdc;border:1px solid #8e8e8e;border-top-color:#777;border-radius:2px"></div>
<div class="t" style="left:1571px;top:218.0px;font-size:14.5px;letter-spacing:0.7px;color:#111;">0</div>
<div class="t" style="left:1640px;top:218.0px;font-size:14.5px;letter-spacing:0.7px;color:#111;">Z</div>
<div class="a" style="left:1655px;top:215px;width:68px;height:21px;background:#dcdcdc;border:1px solid #8e8e8e;border-top-color:#777;border-radius:2px"></div>
<div class="t" style="left:1659px;top:218.0px;font-size:14.5px;letter-spacing:0.7px;color:#111;">0</div>
<div class="t" style="left:1372px;top:242.0px;font-size:14.5px;letter-spacing:0.7px;color:#111;">Rotation</div>
<div class="t" style="left:1464px;top:242.0px;font-size:14.5px;letter-spacing:0.7px;color:#111;">X</div>
<div class="a" style="left:1478px;top:240px;width:68px;height:20px;background:#dcdcdc;border:1px solid #8e8e8e;border-top-color:#777;border-radius:2px"></div>
<div class="t" style="left:1483px;top:242.0px;font-size:14.5px;letter-spacing:0.7px;color:#111;">0</div>
<div class="t" style="left:1552px;top:242.0px;font-size:14.5px;letter-spacing:0.7px;color:#111;">Y</div>
<div class="a" style="left:1567px;top:240px;width:67px;height:20px;background:#dcdcdc;border:1px solid #8e8e8e;border-top-color:#777;border-radius:2px"></div>
<div class="t" style="left:1571px;top:242.0px;font-size:14.5px;letter-spacing:0.7px;color:#111;">0</div>
<div class="t" style="left:1640px;top:242.0px;font-size:14.5px;letter-spacing:0.7px;color:#111;">Z</div>
<div class="a" style="left:1655px;top:240px;width:68px;height:20px;background:#dcdcdc;border:1px solid #8e8e8e;border-top-color:#777;border-radius:2px"></div>
<div class="t" style="left:1659px;top:242.0px;font-size:14.5px;letter-spacing:0.7px;color:#111;">0</div>
<div class="t" style="left:1372px;top:266.0px;font-size:14.5px;letter-spacing:0.7px;color:#111;">Scale</div>
<div class="t" style="left:1464px;top:266.0px;font-size:14.5px;letter-spacing:0.7px;color:#111;">X</div>
<div class="a" style="left:1478px;top:264px;width:68px;height:20px;background:#dcdcdc;border:1px solid #8e8e8e;border-top-color:#777;border-radius:2px"></div>
<div class="t" style="left:1483px;top:266.0px;font-size:14.5px;letter-spacing:0.7px;color:#111;">1</div>
<div class="t" style="left:1552px;top:266.0px;font-size:14.5px;letter-spacing:0.7px;color:#111;">Y</div>
<div class="a" style="left:1567px;top:264px;width:67px;height:20px;background:#dcdcdc;border:1px solid #8e8e8e;border-top-color:#777;border-radius:2px"></div>
<div class="t" style="left:1571px;top:266.0px;font-size:14.5px;letter-spacing:0.7px;color:#111;">1</div>
<div class="t" style="left:1640px;top:266.0px;font-size:14.5px;letter-spacing:0.7px;color:#111;">Z</div>
<div class="a" style="left:1655px;top:264px;width:68px;height:20px;background:#dcdcdc;border:1px solid #8e8e8e;border-top-color:#777;border-radius:2px"></div>
<div class="t" style="left:1659px;top:266.0px;font-size:14.5px;letter-spacing:0.7px;color:#111;">1</div>
<div class="a" style="left:1351px;top:290px;width:377px;height:1px;background:#8a8a8a"></div>
<svg class="a" style="left:1357px;top:299px" width="11" height="10" viewBox="0 0 11 10"><path d="M0 0h11L5.5 10z" fill="#666"/></svg>
<svg class="a" style="left:1375px;top:295px" width="14" height="17" viewBox="0 0 14 17"><path d="M0 0h10l4 4v13H0z" fill="#eef0f3"/><text x="1" y="14" font-size="7" fill="#4a7ad0" font-family="Liberation Sans">C#</text></svg>
<div class="a" style="left:1398px;top:297px;width:15px;height:15px;border:1px solid #666;border-radius:2px;background:linear-gradient(#a9c3e8,#7d9fcf)"></div>
<svg class="a" style="left:1398px;top:295px" width="17" height="16" viewBox="0 0 17 16"><path d="M2.5 9l4 4.5L15 2" fill="none" stroke="#111" stroke-width="2.6"/></svg>
<div class="t" style="left:1418px;top:297.0px;font-size:14.5px;letter-spacing:0.67px;color:#111;font-weight:bold;">HUD Controller (Script)</div>
<svg class="a" style="left:1658px;top:294px" width="18" height="19" viewBox="0 0 18 19"><rect x="1" y="1" width="16" height="17" rx="2" fill="#5a8fd0" stroke="#2d5590" stroke-width="1.2"/><path d="M6 6.5a3 3 0 1 1 4 2.8c-1 .4-1 1-1 2" fill="none" stroke="#cfe0f5" stroke-width="1.4"/><rect x="8.2" y="13" width="1.6" height="1.6" fill="#cfe0f5"/></svg>
<svg class="a" style="left:1684px;top:295px" width="15" height="17" viewBox="0 0 15 17"><g fill="#333"><rect x="0" y="3" width="9" height="2"/><rect x="10" y="0" width="2.5" height="8"/><rect x="3" y="10" width="12" height="2"/><rect x="5" y="8" width="2.5" height="8"/></g></svg>
<svg class="a" style="left:1707px;top:294px" width="21" height="19" viewBox="0 0 21 19"><path fill="#333" d="M6.8 0h2.4l.4 2.2 1.5.6 1.8-1.3 1.7 1.7-1.3 1.8.6 1.5 2.2.4v2.4l-2.2.4-.6 1.5 1.3 1.8-1.7 1.7-1.8-1.3-1.5.6-.4 2.2H6.8l-.4-2.2-1.5-.6-1.8 1.3-1.7-1.7 1.3-1.8-.6-1.5L0 9.2V6.8l2.2-.4.6-1.5L1.5 3.1l1.7-1.7 1.8 1.3 1.5-.6z"/><circle cx="8" cy="8" r="2.6" fill="#c2c2c2"/><path d="M15 13h6l-3 4z" fill="#333"/></svg>
<div class="t" style="left:1372px;top:319.0px;font-size:14.5px;letter-spacing:0.7px;color:#777;">Script</div>
<div class="a" style="left:1532px;top:317px;width:166px;height:19px;background:#cfcfcf;border:1px solid #8e8e8e;border-top-color:#777;border-radius:2px"></div>
<svg class="a" style="left:1536px;top:320px" width="13" height="14" viewBox="0 0 13 14"><path d="M0 0h9l4 4v10H0z" fill="#ddd"/><text x="1" y="12" font-size="6" fill="#9ab" font-family="Liberation Sans">C#</text></svg>
<div class="t" style="left:1553px;top:319.0px;font-size:14.5px;letter-spacing:0.7px;color:#777;">HUDController</div>
<svg class="a" style="left:1708px;top:320px" width="12" height="12" viewBox="0 0 12 12"><circle cx="6" cy="6" r="4.8" fill="none" stroke="#444" stroke-width="1.3"/><circle cx="6" cy="6" r="1.6" fill="#444"/></svg>
<div class="t" style="left:1372px;top:354.0px;font-size:14.5px;letter-spacing:0.63px;color:#111;font-weight:bold;">Interface Elements</div>
<div class="a" style="left:1372px;top:373px;width:157px;height:20px;overflow:hidden"><div class="t" style="left:0;top:2px;font-size:14.5px;letter-spacing:0.7px;color:#111">Resources Text</div></div>
<div class="a" style="left:1531px;top:373px;width:167px;height:21px;background:#dcdcdc;border:1px solid #8e8e8e;border-top-color:#777;border-radius:2px"></div>
<div class="a" style="left:1535px;top:376px;width:15px;height:15px;background:#dfe4ea;border:1.5px solid #eca247;color:#f0a020;font-weight:bold;font-size:13px;line-height:13px;text-align:center;font-family:Liberation Sans">T</div>
<div class="a" style="left:1552px;top:373px;width:144px;height:20px;overflow:hidden"><div class="t" style="left:0;top:2px;font-size:14.5px;letter-spacing:0.7px;color:#111">Resources (Text)</div></div>
<svg class="a" style="left:1708px;top:377px" width="12" height="12" viewBox="0 0 12 12"><circle cx="6" cy="6" r="4.8" fill="none" stroke="#444" stroke-width="1.3"/><circle cx="6" cy="6" r="1.6" fill="#444"/></svg>
<div class="a" style="left:1372px;top:397px;width:157px;height:20px;overflow:hidden"><div class="t" style="left:0;top:2px;font-size:14.5px;letter-spacing:0.7px;color:#111">Resources Requiremen</div></div>
<div class="a" style="left:1531px;top:397px;width:167px;height:21px;background:#dcdcdc;border:1px solid #8e8e8e;border-top-color:#777;border-radius:2px"></div>
<div class="a" style="left:1535px;top:400px;width:15px;height:15px;background:#dfe4ea;border:1.5px solid #eca247;color:#f0a020;font-weight:bold;font-size:13px;line-height:13px;text-align:center;font-family:Liberation Sans">T</div>
<div class="a" style="left:1552px;top:397px;width:144px;height:20px;overflow:hidden"><div class="t" style="left:0;top:2px;font-size:14.5px;letter-spacing:0.7px;color:#111">ResourcesRequirem</div></div>
<svg class="a" style="left:1708px;top:401px" width="12" height="12" viewBox="0 0 12 12"><circle cx="6" cy="6" r="4.8" fill="none" stroke="#444" stroke-width="1.3"/><circle cx="6" cy="6" r="1.6" fill="#444"/></svg>
<div class="a" style="left:1372px;top:421.5px;width:157px;height:20px;overflow:hidden"><div class="t" style="left:0;top:2px;font-size:14.5px;letter-spacing:0.7px;color:#111">Weapon Name Text</div></div>
<div class="a" style="left:1531px;top:421px;width:167px;height:21px;background:#dcdcdc;border:1px solid #8e8e8e;border-top-color:#777;border-radius:2px"></div>
<div class="a" style="left:1535px;top:424px;width:15px;height:15px;background:#dfe4ea;border:1.5px solid #eca247;color:#f0a020;font-weight:bold;font-size:13px;line-height:13px;text-align:center;font-family:Liberation Sans">T</div>
<div class="a" style="left:1552px;top:421.5px;width:144px;height:20px;overflow:hidden"><div class="t" style="left:0;top:2px;font-size:14.5px;letter-spacing:0.7px;color:#111">WeaponName (Text)</div></div>
<svg class="a" style="left:1708px;top:425px" width="12" height="12" viewBox="0 0 12 12"><circle cx="6" cy="6" r="4.8" fill="none" stroke="#444" stroke-width="1.3"/><circle cx="6" cy="6" r="1.6" fill="#444"/></svg>
<div class="a" style="left:1372px;top:445.5px;width:157px;height:20px;overflow:hidden"><div class="t" style="left:0;top:2px;font-size:14.5px;letter-spacing:0.7px;color:#111">Weapon Ammunition T</div></div>
<div class="a" style="left:1531px;top:445px;width:167px;height:21px;background:#dcdcdc;border:1px solid #8e8e8e;border-top-color:#777;border-radius:2px"></div>
<div class="a" style="left:1535px;top:448px;width:15px;height:15px;background:#dfe4ea;border:1.5px solid #eca247;color:#f0a020;font-weight:bold;font-size:13px;line-height:13px;text-align:center;font-family:Liberation Sans">T</div>
<div class="a" style="left:1552px;top:445.5px;width:144px;height:20px;overflow:hidden"><div class="t" style="left:0;top:2px;font-size:14.5px;letter-spacing:0.7px;color:#111">WeaponAmmunition</div></div>
<svg class="a" style="left:1708px;top:449px" width="12" height="12" viewBox="0 0 12 12"><circle cx="6" cy="6" r="4.8" fill="none" stroke="#444" stroke-width="1.3"/><circle cx="6" cy="6" r="1.6" fill="#444"/></svg>
<div class="a" style="left:1372px;top:470px;width:157px;height:20px;overflow:hidden"><div class="t" style="left:0;top:2px;font-size:14.5px;letter-spacing:0.7px;color:#111">Weapon Reload Bar</div></div>
<div class="a" style="left:1531px;top:470px;width:167px;height:21px;background:#dcdcdc;border:1px solid #8e8e8e;border-top-color:#777;border-radius:2px"></div>
<svg class="a" style="left:1535px;top:473px" width="15" height="15" viewBox="0 0 15 15"><g fill="none" stroke="#999" stroke-width="1.2"><path d="M1 5V1h4M10 1h4v4M14 10v4h-4M5 14H1v-4"/><path d="M2 2l4 4M13 2L9 6M13 13L9 9M2 13l4-4"/></g></svg>
<div class="a" style="left:1552px;top:470px;width:144px;height:20px;overflow:hidden"><div class="t" style="left:0;top:2px;font-size:14.5px;letter-spacing:0.7px;color:#111">ReloadBar (Rect Transform)</div></div>
<svg class="a" style="left:1708px;top:474px" width="12" height="12" viewBox="0 0 12 12"><circle cx="6" cy="6" r="4.8" fill="none" stroke="#444" stroke-width="1.3"/><circle cx="6" cy="6" r="1.6" fill="#444"/></svg>
<div class="t" style="left:1372px;top:508.0px;font-size:14.5px;letter-spacing:0.63px;color:#111;font-weight:bold;">Tool Selector</div>
<div class="t" style="left:1372px;top:530.0px;font-size:14.5px;letter-spacing:0.7px;color:#111;">Tool Focus</div>
<div class="a" style="left:1531px;top:527px;width:167px;height:21px;background:#dcdcdc;border:1px solid #8e8e8e;border-top-color:#777;border-radius:2px"></div>
<svg class="a" style="left:1535px;top:529px" width="16" height="16" viewBox="0 0 32 32"><path d="M2 8L15 3l15 5-13 5z" fill="#8cc63f"/><path d="M2 8l15 5v17L2 24z" fill="#3ea6e0"/><path d="M17 13l13-5v15l-13 7z" fill="#f05a28"/></svg>
<div class="t" style="left:1553px;top:530.0px;font-size:14.5px;letter-spacing:0.7px;color:#111;">Focus</div>
<svg class="a" style="left:1708px;top:531px" width="12" height="12" viewBox="0 0 12 12"><circle cx="6" cy="6" r="4.8" fill="none" stroke="#444" stroke-width="1.3"/><circle cx="6" cy="6" r="1.6" fill="#444"/></svg>
<div class="t" style="left:1372px;top:554.5px;font-size:14.5px;letter-spacing:0.7px;color:#111;">Tool Container</div>
<div class="a" style="left:1531px;top:551px;width:167px;height:21px;background:#dcdcdc;border:1px solid #8e8e8e;border-top-color:#777;border-radius:2px"></div>
<svg class="a" style="left:1535px;top:553px" width="16" height="16" viewBox="0 0 32 32"><path d="M2 8L15 3l15 5-13 5z" fill="#8cc63f"/><path d="M2 8l15 5v17L2 24z" fill="#3ea6e0"/><path d="M17 13l13-5v15l-13 7z" fill="#f05a28"/></svg>
<div class="t" style="left:1553px;top:554.5px;font-size:14.5px;letter-spacing:0.7px;color:#111;">Tools</div>
<svg class="a" style="left:1708px;top:555px" width="12" height="12" viewBox="0 0 12 12"><circle cx="6" cy="6" r="4.8" fill="none" stroke="#444" stroke-width="1.3"/><circle cx="6" cy="6" r="1.6" fill="#444"/></svg>
<div class="t" style="left:1372px;top:578.0px;font-size:14.5px;letter-spacing:0.7px;color:#111;">Focus Smoothness</div>
<div class="a" style="left:1531px;top:575px;width:192px;height:21px;background:#dcdcdc;border:1px solid #8e8e8e;border-top-color:#777;border-radius:2px"></div>
<div class="t" style="left:1536px;top:578.0px;font-size:14.5px;letter-spacing:0.7px;color:#111;">15</div>
<div class="a" style="left:1351px;top:600px;width:377px;height:1px;background:#8a8a8a"></div>
<div class="btn" style="left:1381px;top:615px;width:311px;height:29px;border-color:#666;border-radius:3px;background:linear-gradient(#fbfbfb,#dcdcdc)"></div>
<div class="t" style="left:1470px;top:620px;font-size:16.5px;letter-spacing:0.67px;color:#111">Add Component</div><svg width="0" height="0" style="position:absolute"><defs><linearGradient id="fg" x1="0" y1="0" x2="0" y2="1"><stop offset="0" stop-color="#74838e"/><stop offset="1" stop-color="#3d4a54"/></linearGradient></defs></svg>
<!-- PROJECT -->
<div class="a" style="left:0;top:603px;width:132px;height:23px;background:linear-gradient(#ededed,#e0e0e0);border-radius:0 4px 0 0;border-right:1px solid #8e8e8e"></div>
<svg class="a" style="left:10px;top:608px" width="16" height="13" viewBox="0 0 16 13"><path d="M0 1h6l1.5 1.5H16V13H0z" fill="#666"/><rect x="0" y="3.5" width="16" height="9.5" fill="#777"/></svg>
<div class="t tabtxt" style="left:31px;top:607px">Project</div>
<svg class="a" style="left:148px;top:607px" width="11" height="15" viewBox="0 0 11 15"><rect x="0.7" y="0.7" width="9.6" height="13.6" fill="#ddd" stroke="#666" stroke-width="1.2"/><path d="M2.5 4h6M2.5 7h6M2.5 10h6" stroke="#777" stroke-width="1"/></svg>
<div class="t tabtxt" style="left:166px;top:607px;color:#222">Console</div>
<svg class="a" style="left:281px;top:607px" width="15" height="15" viewBox="0 0 15 15"><circle cx="7.5" cy="7.5" r="6.3" fill="#ddd" stroke="#555" stroke-width="1.6"/><path d="M7.5 3.5v4.2h3" fill="none" stroke="#444" stroke-width="1.6"/></svg>
<div class="t tabtxt" style="left:301px;top:607px;color:#222">Animation</div>
<svg class="a" style="left:1305px;top:611px" width="11" height="13" viewBox="0 0 11 13"><path d="M2.5 5.5V4a3 3 0 0 1 6 0" fill="none" stroke="#555" stroke-width="1.6"/><rect x="0.5" y="5.5" width="10" height="7.5" fill="#555"/></svg>
<svg class="a" style="left:1323px;top:616px" width="19" height="8" viewBox="0 0 19 8"><path d="M0 1.5h5L2.5 4.5z" fill="#444"/><g fill="#333"><rect x="7" y="0" width="12" height="1.6"/><rect x="7" y="3" width="12" height="1.6"/><rect x="7" y="6" width="12" height="1.6"/></g></svg>
<div class="ptool" style="left:0;top:625px;width:1346px;height:25px"></div>
<div class="a" style="left:7px;top:626px;width:1px;height:23px;background:#9a9a9a"></div>
<div class="a" style="left:70px;top:626px;width:1px;height:23px;background:#9a9a9a"></div>
<div class="t" style="left:16px;top:631px;font-size:13.5px;color:#111">Create</div>
<svg class="a" style="left:59px;top:634px" width="6" height="4" viewBox="0 0 6 4"><path d="M0 0h6L3 4z" fill="#333"/></svg>
<div class="a" style="left:831px;top:629px;width:404px;height:19px;border:1px solid #7e7e7e;border-radius:10px;background:linear-gradient(#d4d4d4,#e4e4e4)"></div>
<svg class="a" style="left:837px;top:632px" width="13" height="13" viewBox="0 0 13 13"><circle cx="5" cy="5" r="3.6" fill="none" stroke="#555" stroke-width="1.4"/><path d="M7.6 7.6l4 4" stroke="#555" stroke-width="1.8"/></svg>
<div class="a" style="left:1250px;top:626px;width:1px;height:23px;background:#9a9a9a"></div>
<div class="a" style="left:1279px;top:626px;width:1px;height:23px;background:#9a9a9a"></div>
<div class="a" style="left:1308px;top:626px;width:1px;height:23px;background:#9a9a9a"></div>
<div class="a" style="left:1338px;top:626px;width:1px;height:23px;background:#9a9a9a"></div>
<svg class="a" style="left:1256px;top:630px" width="18" height="16" viewBox="0 0 18 16"><path d="M6 3L0 13h12z" fill="#444"/><circle cx="11" cy="5" r="4" fill="#444"/><rect x="10" y="9" width="7" height="6" fill="#444"/></svg>
<svg class="a" style="left:1285px;top:630px" width="18" height="17" viewBox="0 0 18 17"><path d="M1 1h7l9 9-7 7-9-9z" fill="#444"/><circle cx="5" cy="5" r="1.6" fill="#ddd"/></svg>
<svg class="a" style="left:1315px;top:630px" width="15" height="15" viewBox="0 0 15 15"><path d="M7.5 0l2.2 4.8 5.3.6-3.9 3.5 1.1 5.2-4.7-2.7-4.7 2.7 1.1-5.2L0 5.4l5.3-.6z" fill="#999"/></svg>
<div class="panel" style="left:0;top:650px;width:284px;height:314px"></div>
<div class="a" style="left:284px;top:650px;width:1px;height:314px;background:#8e8e8e"></div>
<div class="a" style="left:285px;top:650px;width:1061px;height:24px;background:#dcdcdc;border-bottom:1px solid #9a9a9a"></div>
<div class="a" style="left:285px;top:674px;width:1061px;height:267px;background:#bebebe"></div>
<div class="a" style="left:285px;top:941px;width:1061px;height:23px;background:#dedede;border-top:1px solid #8a8a8a"></div>
<div class="a" style="left:1250px;top:950px;width:74px;height:6px;border-radius:3px;background:#7a7a7a;border:1px solid #666"></div>
<div class="a" style="left:1286px;top:946px;width:14px;height:14px;border-radius:50%;background:linear-gradient(#fafafa,#d2d2d2);border:1px solid #555"></div>
<div class="a" style="left:0;top:822px;width:284px;height:22px;background:#8c8c8c"></div>

<svg class="a" style="left:7px;top:656.5px" width="10" height="11" viewBox="0 0 10 11"><path d="M0 0l10 5.5L0 11z" fill="#6b6b6b"/></svg>
<svg class="a" style="left:23px;top:653px" width="19" height="18" viewBox="0 0 19 18"><path d="M9.5 0l2.9 6 6.6.8-4.9 4.5 1.3 6.5-5.9-3.3-5.9 3.3 1.3-6.5L0 6.8 6.6 6z" fill="#f8c92c" stroke="#d8a21a" stroke-width=".8"/></svg>
<div class="t" style="left:46px;top:655.0px;font-size:14.5px;letter-spacing:0.54px;color:#111;font-weight:bold">Favorites</div>
<svg class="a" style="left:6px;top:699px" width="12" height="10" viewBox="0 0 12 10"><path d="M0 0h12L6 10z" fill="#6b6b6b"/></svg>
<svg class="a" style="left:23px;top:695px" width="19" height="15" viewBox="0 0 19 15"><path d="M1 4V2c0-1 .5-1.5 1.5-1.5h4c1 0 1.5.5 2 1.5h9c1 0 1.5.5 1.5 1.5V4z" fill="#c9cfd3"/><rect x="0" y="3" width="19" height="12" rx="1.5" fill="url(#fg)"/></svg>
<div class="t" style="left:46px;top:697.0px;font-size:14.5px;letter-spacing:0.56px;color:#111;font-weight:bold">Assets</div>
<svg class="a" style="left:25px;top:720.7px" width="12" height="10" viewBox="0 0 12 10"><path d="M0 0h12L6 10z" fill="#6b6b6b"/></svg>
<svg class="a" style="left:42px;top:716.7px" width="19" height="15" viewBox="0 0 19 15"><path d="M1 4V2c0-1 .5-1.5 1.5-1.5h4c1 0 1.5.5 2 1.5h9c1 0 1.5.5 1.5 1.5V4z" fill="#c9cfd3"/><rect x="0" y="3" width="19" height="12" rx="1.5" fill="url(#fg)"/></svg>
<div class="t" style="left:65px;top:718.7px;font-size:14.5px;letter-spacing:0.56px;color:#111">Project</div>
<svg class="a" style="left:44px;top:742.4px" width="12" height="10" viewBox="0 0 12 10"><path d="M0 0h12L6 10z" fill="#6b6b6b"/></svg>
<svg class="a" style="left:61px;top:738.4px" width="19" height="15" viewBox="0 0 19 15"><path d="M1 4V2c0-1 .5-1.5 1.5-1.5h4c1 0 1.5.5 2 1.5h9c1 0 1.5.5 1.5 1.5V4z" fill="#c9cfd3"/><rect x="0" y="3" width="19" height="12" rx="1.5" fill="url(#fg)"/></svg>
<div class="t" style="left:84px;top:740.4px;font-size:14.5px;letter-spacing:0.56px;color:#111">Prefabs</div>
<svg class="a" style="left:80px;top:759.8px" width="19" height="15" viewBox="0 0 19 15"><path d="M1 4V2c0-1 .5-1.5 1.5-1.5h4c1 0 1.5.5 2 1.5h9c1 0 1.5.5 1.5 1.5V4z" fill="#c9cfd3"/><rect x="0" y="3" width="19" height="12" rx="1.5" fill="url(#fg)"/></svg>
<div class="t" style="left:103px;top:761.8px;font-size:14.5px;letter-spacing:0.56px;color:#111">Obstacles</div>
<svg class="a" style="left:80px;top:781.5px" width="19" height="15" viewBox="0 0 19 15"><path d="M1 4V2c0-1 .5-1.5 1.5-1.5h4c1 0 1.5.5 2 1.5h9c1 0 1.5.5 1.5 1.5V4z" fill="#c9cfd3"/><rect x="0" y="3" width="19" height="12" rx="1.5" fill="url(#fg)"/></svg>
<div class="t" style="left:103px;top:783.5px;font-size:14.5px;letter-spacing:0.56px;color:#111">Weapons</div>
<svg class="a" style="left:61px;top:803.2px" width="19" height="15" viewBox="0 0 19 15"><path d="M1 4V2c0-1 .5-1.5 1.5-1.5h4c1 0 1.5.5 2 1.5h9c1 0 1.5.5 1.5 1.5V4z" fill="#c9cfd3"/><rect x="0" y="3" width="19" height="12" rx="1.5" fill="url(#fg)"/></svg>
<div class="t" style="left:84px;top:805.2px;font-size:14.5px;letter-spacing:0.56px;color:#111">Scenes</div>
<svg class="a" style="left:44px;top:829px" width="12" height="10" viewBox="0 0 12 10"><path d="M0 0h12L6 10z" fill="#6b6b6b"/></svg>
<svg class="a" style="left:61px;top:825px" width="19" height="15" viewBox="0 0 19 15"><path d="M1 4V2c0-1 .5-1.5 1.5-1.5h4c1 0 1.5.5 2 1.5h9c1 0 1.5.5 1.5 1.5V4z" fill="#c9cfd3"/><rect x="0" y="3" width="19" height="12" rx="1.5" fill="url(#fg)"/></svg>
<div class="t" style="left:84px;top:827.0px;font-size:14.5px;letter-spacing:0.56px;color:#f2f2f2">Scripts</div>
<svg class="a" style="left:80px;top:846.5px" width="19" height="15" viewBox="0 0 19 15"><path d="M1 4V2c0-1 .5-1.5 1.5-1.5h4c1 0 1.5.5 2 1.5h9c1 0 1.5.5 1.5 1.5V4z" fill="#c9cfd3"/><rect x="0" y="3" width="19" height="12" rx="1.5" fill="url(#fg)"/></svg>
<div class="t" style="left:103px;top:848.5px;font-size:14.5px;letter-spacing:0.56px;color:#111">Weapons</div>
<svg class="a" style="left:26px;top:871.5px" width="10" height="11" viewBox="0 0 10 11"><path d="M0 0l10 5.5L0 11z" fill="#6b6b6b"/></svg>
<svg class="a" style="left:42px;top:868px" width="19" height="15" viewBox="0 0 19 15"><path d="M1 4V2c0-1 .5-1.5 1.5-1.5h4c1 0 1.5.5 2 1.5h9c1 0 1.5.5 1.5 1.5V4z" fill="#c9cfd3"/><rect x="0" y="3" width="19" height="12" rx="1.5" fill="url(#fg)"/></svg>
<div class="t" style="left:65px;top:870.0px;font-size:14.5px;letter-spacing:0.56px;color:#111">Standard Assets</div>
<svg class="a" style="left:7px;top:893.0px" width="10" height="11" viewBox="0 0 10 11"><path d="M0 0l10 5.5L0 11z" fill="#6b6b6b"/></svg>
<svg class="a" style="left:23px;top:889.5px" width="19" height="15" viewBox="0 0 19 15"><path d="M1 4V2c0-1 .5-1.5 1.5-1.5h4c1 0 1.5.5 2 1.5h9c1 0 1.5.5 1.5 1.5V4z" fill="#c9cfd3"/><rect x="0" y="3" width="19" height="12" rx="1.5" fill="url(#fg)"/></svg>
<div class="t" style="left:46px;top:891.5px;font-size:14.5px;letter-spacing:0.56px;color:#111;font-weight:bold">Packages</div>
<div class="t" style="left:292px;top:656.0px;font-size:14.5px;letter-spacing:0.6px;color:#111">Assets</div>
<svg class="a" style="left:346px;top:658px" width="7" height="8" viewBox="0 0 7 8"><path d="M0 0l7 4-7 4z" fill="#777"/></svg>
<div class="t" style="left:363px;top:656.0px;font-size:14.5px;letter-spacing:0.6px;color:#111">Project</div>
<svg class="a" style="left:420px;top:658px" width="7" height="8" viewBox="0 0 7 8"><path d="M0 0l7 4-7 4z" fill="#777"/></svg>
<div class="t" style="left:436px;top:656.0px;font-size:14.5px;letter-spacing:0.6px;color:#111;font-weight:bold">Scripts</div>
<svg class="a" style="left:497px;top:658px" width="7" height="8" viewBox="0 0 7 8"><path d="M0 0l7 4-7 4z" fill="#777"/></svg>
<svg class="a" style="left:322.0px;top:693px" width="56" height="78" viewBox="0 0 56 78"><path d="M1 1h43l11 11v65H1z" fill="#dfe1e4" stroke="#a8a8a8" stroke-width="1"/><path d="M44 1l11 11c-4-1-8 0-11 3z" fill="#c4c6c8"/><text x="6.5" y="63" font-size="34" fill="#4a78c8" stroke="#4a78c8" stroke-width="0.7" font-family="Liberation Sans">C#</text></svg>
<div class="t" style="left:289.5px;width:120px;text-align:center;top:780px;font-size:12.5px;color:#111;-webkit-text-stroke:0.2px #111">Door</div>
<svg class="a" style="left:424.7px;top:693px" width="56" height="78" viewBox="0 0 56 78"><path d="M1 1h43l11 11v65H1z" fill="#dfe1e4" stroke="#a8a8a8" stroke-width="1"/><path d="M44 1l11 11c-4-1-8 0-11 3z" fill="#c4c6c8"/><text x="6.5" y="63" font-size="34" fill="#4a78c8" stroke="#4a78c8" stroke-width="0.7" font-family="Liberation Sans">C#</text></svg>
<div class="t" style="left:392.2px;width:120px;text-align:center;top:780px;font-size:12.5px;color:#111;-webkit-text-stroke:0.2px #111">GameCamera</div>
<svg class="a" style="left:527.4px;top:693px" width="56" height="78" viewBox="0 0 56 78"><path d="M1 1h43l11 11v65H1z" fill="#dfe1e4" stroke="#a8a8a8" stroke-width="1"/><path d="M44 1l11 11c-4-1-8 0-11 3z" fill="#c4c6c8"/><text x="6.5" y="63" font-size="34" fill="#4a78c8" stroke="#4a78c8" stroke-width="0.7" font-family="Liberation Sans">C#</text></svg>
<div class="t" style="left:494.9px;width:120px;text-align:center;top:780px;font-size:12.5px;color:#111;-webkit-text-stroke:0.2px #111">HUDController</div>
<svg class="a" style="left:630.1px;top:693px" width="56" height="78" viewBox="0 0 56 78"><path d="M1 1h43l11 11v65H1z" fill="#dfe1e4" stroke="#a8a8a8" stroke-width="1"/><path d="M44 1l11 11c-4-1-8 0-11 3z" fill="#c4c6c8"/><text x="6.5" y="63" font-size="34" fill="#4a78c8" stroke="#4a78c8" stroke-width="0.7" font-family="Liberation Sans">C#</text></svg>
<div class="t" style="left:597.6px;width:120px;text-align:center;top:780px;font-size:12.5px;color:#111;-webkit-text-stroke:0.2px #111">ItemBox</div>
<svg class="a" style="left:732.8px;top:693px" width="56" height="78" viewBox="0 0 56 78"><path d="M1 1h43l11 11v65H1z" fill="#dfe1e4" stroke="#a8a8a8" stroke-width="1"/><path d="M44 1l11 11c-4-1-8 0-11 3z" fill="#c4c6c8"/><text x="6.5" y="63" font-size="34" fill="#4a78c8" stroke="#4a78c8" stroke-width="0.7" font-family="Liberation Sans">C#</text></svg>
<div class="t" style="left:700.3px;width:120px;text-align:center;top:780px;font-size:12.5px;color:#111;-webkit-text-stroke:0.2px #111">Obstacle</div>
<svg class="a" style="left:835.5px;top:693px" width="56" height="78" viewBox="0 0 56 78"><path d="M1 1h43l11 11v65H1z" fill="#dfe1e4" stroke="#a8a8a8" stroke-width="1"/><path d="M44 1l11 11c-4-1-8 0-11 3z" fill="#c4c6c8"/><text x="6.5" y="63" font-size="34" fill="#4a78c8" stroke="#4a78c8" stroke-width="0.7" font-family="Liberation Sans">C#</text></svg>
<div class="t" style="left:803.0px;width:120px;text-align:center;top:780px;font-size:12.5px;color:#111;-webkit-text-stroke:0.2px #111">Player</div>
<svg class="a" style="left:938.2px;top:693px" width="56" height="78" viewBox="0 0 56 78"><path d="M1 1h43l11 11v65H1z" fill="#dfe1e4" stroke="#a8a8a8" stroke-width="1"/><path d="M44 1l11 11c-4-1-8 0-11 3z" fill="#c4c6c8"/><text x="6.5" y="63" font-size="34" fill="#4a78c8" stroke="#4a78c8" stroke-width="0.7" font-family="Liberation Sans">C#</text></svg>
<div class="t" style="left:905.7px;width:120px;text-align:center;top:780px;font-size:12.5px;color:#111;-webkit-text-stroke:0.2px #111">ResourceObj...</div>
<svg class="a" style="left:1029px;top:700px" width="78" height="63" viewBox="0 0 78 63"><path d="M3 6c0-3 2-5 5-5h18c2 0 3 1 4 3l2 3h39c3 0 5 2 5 5v8H3z" fill="#dcdcdc" stroke="#aaa" stroke-width="1"/><rect x="1" y="13" width="76" height="49" rx="5" fill="#56656f"/><rect x="1" y="13" width="76" height="3" rx="1" fill="#7a8892"/><path d="M1 42L77 22v35c0 3-2 5-5 5H6c-3 0-5-2-5-5z" fill="#4b5962"/></svg>
<div class="t" style="left:1006px;width:120px;text-align:center;top:780px;font-size:12.5px;color:#111">Weapons</div>
<div class="a" style="left:0;top:964px;width:1728px;height:29px;background:linear-gradient(#a8a8a8,#9d9d9d)"></div>
<svg class="a" style="left:3px;top:971px" width="20" height="18" viewBox="0 0 20 18"><path d="M10 1L19 17H1z" fill="#f5c518" stroke="#8a6d00" stroke-width="1.2" stroke-linejoin="round"/><rect x="9.1" y="6" width="1.8" height="6" fill="#333"/><rect x="9.1" y="13.3" width="1.8" height="1.8" fill="#333"/></svg>
<div class="t" style="left:27px;top:972px;font-size:15px;letter-spacing:0.58px;color:#3a3a24">Assets/Project/Scripts/Player.cs(47,18): warning CS0414: The private field `Player.isUsingTools' is assigned but its value is never used</div>

<div class="a" style="left:0;top:993px;width:1728px;height:87px;background:#000"></div>
<div class="a" style="left:668px;top:995px;width:392px;height:90px;background:#242424;border-radius:8px"></div>
<svg class="a" style="left:680px;top:1008px" width="54" height="52" viewBox="0 0 54 52"><defs><linearGradient id="fl" x1="0" y1="0" x2="0" y2="1"><stop offset="0" stop-color="#3fb5f5"/><stop offset="1" stop-color="#1b78e6"/></linearGradient></defs><rect x="0" y="0" width="54" height="52" rx="4" fill="url(#fl)"/><path d="M27 0h23c2 0 4 2 4 4v44c0 2-2 4-4 4H30c-2-8-3-16-3-22h5c0-10-2-20-5-30z" fill="#e8eef5"/><path d="M8 34c10 8 28 8 38 0" fill="none" stroke="#1a2a3a" stroke-width="2.2"/><rect x="15" y="14" width="2.4" height="6" fill="#1a2a3a"/><rect x="38" y="14" width="2.4" height="6" fill="#1a2a3a"/></svg>
<svg class="a" style="left:748px;top:1005px" width="58" height="58" viewBox="0 0 58 58"><circle cx="29" cy="29" r="28" fill="#f0f4f8"/><circle cx="29" cy="29" r="25.5" fill="#1e7fe0"/><circle cx="29" cy="29" r="22" fill="none" stroke="#cfe4fa" stroke-width="2.2" stroke-dasharray="0.8 2.2"/><path d="M44 13L31.5 31.5 26.5 26.5z" fill="#ff3b30"/><path d="M14 45l12.5-18.5 5 5z" fill="#eef"/></svg>
<svg class="a" style="left:815px;top:1000px" width="65" height="65" viewBox="0 0 65 65"><defs><filter id="ush" x="-20%" y="-20%" width="140%" height="140%"><feGaussianBlur stdDeviation="1.5"/></filter></defs><path d="M4 33L23 12 48 4 62 15 63 51 56 63 30 58z" fill="#000" filter="url(#ush)" opacity=".9"/><path d="M6 33L24 13 48 6 60 16 61 50 55 61 31 56z" fill="#151515"/><path fill="#fff" d="M15.8 29.7L31.5 15.8 46.2 11.9 37.5 29.7z"/><path fill="#fff" d="M15.8 35.8H37.5L46.2 54 28 48.8z"/><path fill="#fff" d="M41.9 33.2L51.4 15.8 56.6 32.3 51.9 50.6z"/></svg>
<svg class="a" style="left:890px;top:1000px" width="65" height="65" viewBox="890 1000 65 65"><path d="M893 1010L936 1004.5 950 1058 942 1063 898 1062z" fill="#2a262d"/><path d="M930.7 1009.8L942.8 1011.5 948 1047 938.5 1055 904.6 1048.8 935 1046.5z" fill="#9a62e0"/><path d="M901.5 1027.5L904 1040 928 1020 929 1042z" fill="none" stroke="#a873ea" stroke-width="3.2" stroke-linejoin="round"/></svg>
<div class="a" style="left:970px;top:1004px;width:1px;height:65px;background:#555"></div>
<svg class="a" style="left:990px;top:998px" width="60" height="70" viewBox="990 998 60 70"><defs><linearGradient id="trg" x1="0" y1="0" x2="1" y2="0"><stop offset="0" stop-color="#cfcfcf"/><stop offset="0.5" stop-color="#ececec"/><stop offset="1" stop-color="#d6d6d6"/></linearGradient></defs><path d="M1000 1008l8-5 7 6 6-4 8 6 8-3 6 5-3 8h-38z" fill="#555"/><path d="M1005 1006l6-2 4 8-6 2zM1022 1005l6 1-2 9-6-1z" fill="#6ab0a8"/><path d="M1011 1009l5 6M1027 1009l-2 6" stroke="#8a3a2a" stroke-width="2"/><path d="M997.5 1012 L1043.5 1012 L1039.5 1059 Q1039 1063 1035 1063 L1008 1063 Q1004 1063 1003.8 1059z" fill="url(#trg)"/><path d="M997.5 1012 Q1020.5 1019 1043.5 1012" fill="none" stroke="#bbb" stroke-width="1.2"/></svg>
<div class="a" style="left:704px;top:1071px;width:6px;height:6px;border-radius:50%;background:#888"></div>
<div class="a" style="left:845px;top:1071px;width:6px;height:6px;border-radius:50%;background:#888"></div>
<div class="a" style="left:915px;top:1071px;width:6px;height:6px;border-radius:50%;background:#888"></div>
<svg class="a" style="left:1110px;top:925px" width="30" height="35" viewBox="1110 925 30 35"><path d="M1117.2 929.5L1117.4 952.5 1121 948.5 1124.5 955.5 1129.8 953 1126.6 946.3 1132.5 946z" fill="#fff" stroke="rgba(0,0,0,.25)" stroke-width=".6"/><path d="M1118.6 933L1118.8 949 1121.3 946 1125.2 953.3 1127.8 952 1124.2 944.8 1128.6 944.6z" fill="#000"/></svg>
</body></html>
